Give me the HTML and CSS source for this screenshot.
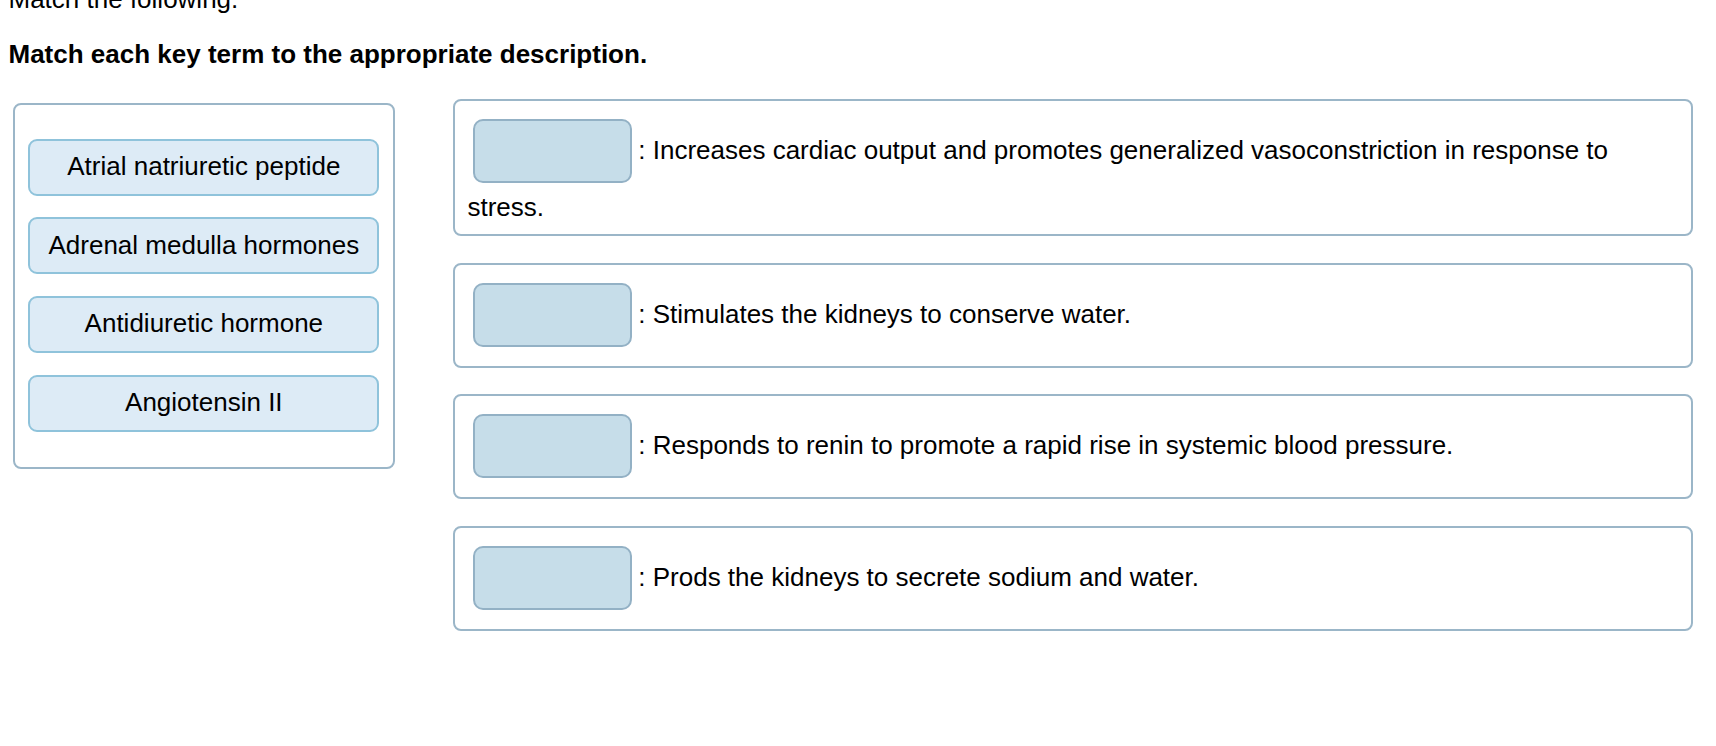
FILE: index.html
```html
<!DOCTYPE html>
<html lang="en">
<head>
<meta charset="utf-8">
<title>Match the following</title>
<link rel="stylesheet" href="styles.css">
</head>
<body>
<div class="page">
  <p class="intro">Match the following.</p>
  <p class="prompt">Match each key term to the appropriate description.</p>
  <div class="matching">
    <div class="terms">
      <div class="term">Atrial natriuretic peptide</div>
      <div class="term">Adrenal medulla hormones</div>
      <div class="term">Antidiuretic hormone</div>
      <div class="term">Angiotensin II</div>
    </div>
    <div class="descs">
      <div class="desc"><span class="drop"></span>: Increases cardiac output and promotes generalized vasoconstriction in response to stress.</div>
      <div class="desc"><span class="drop"></span>: Stimulates the kidneys to conserve water.</div>
      <div class="desc"><span class="drop"></span>: Responds to renin to promote a rapid rise in systemic blood pressure.</div>
      <div class="desc"><span class="drop"></span>: Prods the kidneys to secrete sodium and water.</div>
    </div>
  </div>
</div>
</body>
</html>
```
FILE: styles.css
```css
html, body {
  margin: 0;
  padding: 0;
  background: #ffffff;
}

body {
  font-family: "Liberation Sans", Arial, Helvetica, sans-serif;
  font-size: 26px;
  color: #000000;
}

.page {
  display: flow-root;
  padding: 0 23px 0 5.5px;
}

.intro {
  margin: -15px 0 0 0;
  padding-left: 3px;
  line-height: 29.9px;
}

.prompt {
  margin: 25px 0 0 0;
  padding-left: 3px;
  line-height: 29.9px;
  font-weight: bold;
}

.matching {
  display: flex;
  align-items: flex-start;
  margin-top: 29.5px;
}

.terms {
  box-sizing: border-box;
  flex: 0 0 382.3px;
  width: 382.3px;
  margin: 3.2px 0 0 7.2px;
  padding: 34px 13.6px 35px 13.6px;
  border: 2px solid #9bb6c8;
  border-radius: 8px;
  display: flex;
  flex-direction: column;
  gap: 21.7px;
}

.term {
  box-sizing: border-box;
  height: 57px;
  border: 2px solid #8fc3db;
  border-radius: 9px;
  background: #ddebf6;
  display: flex;
  align-items: center;
  justify-content: center;
  line-height: 29.9px;
  white-space: nowrap;
}

.descs {
  flex: 1 1 auto;
  margin-left: 57.7px;
  display: flex;
  flex-direction: column;
  gap: 26.5px;
}

.desc {
  border: 2px solid #9bb6c8;
  border-radius: 8px;
  padding: 10px 13px 11px 12.8px;
  line-height: 32px;
}

.drop {
  display: inline-block;
  box-sizing: border-box;
  width: 159px;
  height: 64px;
  margin: 8px 6px 8px 5.8px;
  border: 2px solid #93b1c5;
  border-radius: 10px;
  background: #c6dde9;
  vertical-align: -32px;
}
```
